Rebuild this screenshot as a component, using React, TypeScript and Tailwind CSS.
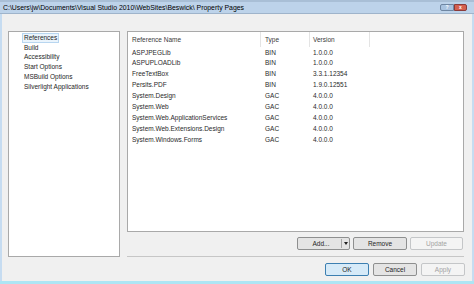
import React from 'react';

const refs = [
  ['ASPJPEGLib', 'BIN', '1.0.0.0'],
  ['ASPUPLOADLib', 'BIN', '1.0.0.0'],
  ['FreeTextBox', 'BIN', '3.3.1.12354'],
  ['Persits.PDF', 'BIN', '1.9.0.12551'],
  ['System.Design', 'GAC', '4.0.0.0'],
  ['System.Web', 'GAC', '4.0.0.0'],
  ['System.Web.ApplicationServices', 'GAC', '4.0.0.0'],
  ['System.Web.Extensions.Design', 'GAC', '4.0.0.0'],
  ['System.Windows.Forms', 'GAC', '4.0.0.0'],
];

const pages = ['References', 'Build', 'Accessibility', 'Start Options', 'MSBuild Options', 'Silverlight Applications'];

const btn = 'h-[13px] flex items-center justify-center rounded-[2px] border';
const normal = 'border-[#8e8f8f] bg-[#e4e4e4] text-[#1e1e1e]';
const disabled = 'border-[#c4c6c8] bg-[#f4f4f4] text-[#a3a3a3]';

export default function App() {
  return (
    <div className="w-[474px] h-[284px] flex flex-col bg-[#c6dcf1] font-['Liberation_Sans',Arial,sans-serif] text-[6.5px] text-[#1e1e1e] overflow-hidden">
      {/* title bar */}
      <div className="h-[14px] shrink-0 flex justify-between pl-[3px] pr-[7px] bg-[#bdd3ea] border-t-[2px] border-t-[#a9bfd6] border-b border-b-[#9fb4cb]">
        <span className="text-[6.9px] leading-[11px] text-black">C:\Users\jw\Documents\Visual Studio 2010\WebSites\Beswick\ Property Pages</span>
        <div className="flex mt-[2px] h-[7px]">
          <div className="w-[14px] h-[7px] rounded-l-[2px] border border-[#6f87a3] bg-[#a9c3e0] flex items-center justify-center text-[5px] leading-none text-white font-bold">?</div>
          <div className="w-[13px] h-[7px] rounded-r-[2px] border border-[#8a3b3b] bg-[#d4604f] flex items-center justify-center text-[5px] leading-none text-white font-bold">x</div>
        </div>
      </div>

      {/* body */}
      <div className="flex-1 mx-[2px] bg-[#f0f0f0] flex flex-col">
        <div className="flex h-[243px] pt-[17px] pl-[6px] pr-[8px] gap-[7px]">
          {/* page list */}
          <div className="w-[112px] border border-[#a9a9a9] bg-white pt-[1px]">
            {pages.map((p, i) => (
              <div key={p} className="h-[9.7px] flex items-center ml-[13px]">
                <span
                  className={`px-[1px] border leading-[7.5px] ${
                    i === 0 ? 'border-[#b8d6f0] bg-[#eaf4fc]' : 'border-transparent'
                  }`}
                >
                  {p}
                </span>
              </div>
            ))}
          </div>

          {/* references */}
          <div className="flex-1 flex flex-col border-b border-[#c6c6c6]">
            <div className="h-[201px] border border-[#a9a9a9] bg-white">
              <div className="h-[15px] flex text-[#3a3a3a]">
                <div className="w-[133px] pl-[4px] flex items-center border-r border-[#e4e4e4]">Reference Name</div>
                <div className="w-[49px] pl-[4px] flex items-center border-r border-[#e4e4e4]">Type</div>
                <div className="w-[60px] pl-[3px] flex items-center border-r border-[#e4e4e4]">Version</div>
              </div>
              {refs.map(([name, type, ver]) => (
                <div key={name} className="h-[10.9px] flex items-center text-[#2a2a2a]">
                  <div className="w-[133px] pl-[4px]">{name}</div>
                  <div className="w-[49px] pl-[4px]">{type}</div>
                  <div className="w-[60px] pl-[3px]">{ver}</div>
                </div>
              ))}
            </div>
            <div className="flex justify-end gap-[3px] mt-[5px] pr-[1px]">
              <div className={`${btn} ${normal} w-[53px] justify-start`}>
                <span className="flex-1 text-center pl-[3px]">Add...</span>
                <span className="w-[1px] h-[9px] bg-[#a8a8a8]" />
                <span className="w-[7px] flex items-center justify-center">
                  <span className="w-0 h-0 border-l-[2px] border-r-[2px] border-t-[3px] border-l-transparent border-r-transparent border-t-[#202020]" />
                </span>
              </div>
              <div className={`${btn} ${normal} w-[54px]`}>Remove</div>
              <div className={`${btn} ${disabled} w-[53px]`}>Update</div>
            </div>
          </div>
        </div>

        {/* dialog buttons */}
        <div className="flex justify-end gap-[4px] pt-[6px] pr-[7px]">
          <div className={`${btn} w-[44px] border-[#3c7fb1] bg-[#d6eaf8] text-[#1e1e1e]`}>OK</div>
          <div className={`${btn} ${normal} w-[44px]`}>Cancel</div>
          <div className={`${btn} ${disabled} w-[44px]`}>Apply</div>
        </div>
      </div>
      <div className="h-[3px] shrink-0 bg-[#ade5f4]" />
    </div>
  );
}
